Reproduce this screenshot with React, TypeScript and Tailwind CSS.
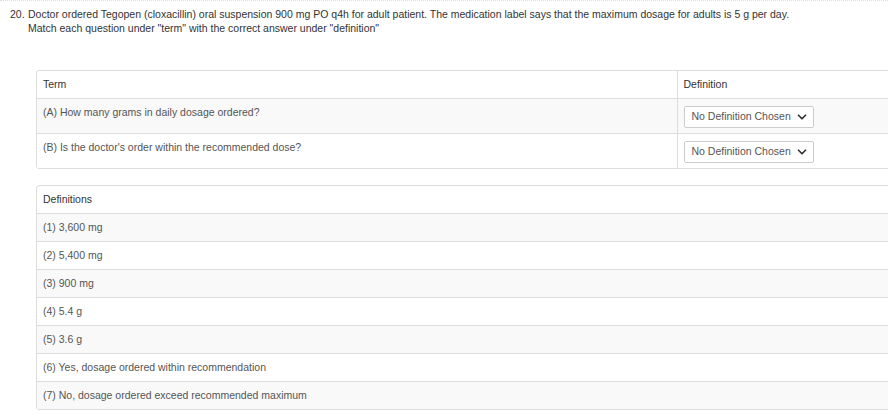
import { ChevronDown } from 'lucide-react'

const terms = [
  '(A) How many grams in daily dosage ordered?',
  "(B) Is the doctor's order within the recommended dose?",
]

const definitions = [
  '(1) 3,600 mg',
  '(2) 5,400 mg',
  '(3) 900 mg',
  '(4) 5.4 g',
  '(5) 3.6 g',
  '(6) Yes, dosage ordered within recommendation',
  '(7) No, dosage ordered exceed recommended maximum',
]

function DefinitionSelect() {
  return (
    <div className="flex h-[22px] w-[130px] items-center justify-between whitespace-nowrap rounded-[2px] border border-[#cccccc] bg-white pl-[7px] pr-[4px] text-[10.5px] text-[#555555]">
      <span>No Definition Chosen</span>
      <ChevronDown size={14} strokeWidth={3} className="text-[#333333]" />
    </div>
  )
}

export default function App() {
  return (
    <div className="h-[415px] w-[888px] overflow-hidden bg-white font-['Liberation_Sans',Arial,sans-serif] text-[#333333]">
      <div className="border-t border-dotted border-[#dddddd]" />

      {/* Question */}
      <div className="flex pl-[10px] pt-[6px] text-[10.5px] leading-[14px]">
        <span className="w-[18px] shrink-0">20.</span>
        <div>
          <p>
            Doctor ordered Tegopen (cloxacillin) oral suspension 900 mg PO q4h for adult patient. The
            medication label says that the maximum dosage for adults is 5 g per day.
          </p>
          <p>Match each question under "term" with the correct answer under "definition"</p>
        </div>
      </div>

      {/* Term table */}
      <div className="ml-[36px] mt-[35px] w-[870px] overflow-hidden rounded-[3px] border border-[#dddddd]">
        <table className="w-full border-collapse text-left">
          <thead>
            <tr className="h-[27px] text-[10.5px] text-[#333333]">
              <th className="w-[640px] border-r border-[#dddddd] px-[6px] pt-[1px] font-normal">Term</th>
              <th className="px-[6px] pt-[1px] font-normal">Definition</th>
            </tr>
          </thead>
          <tbody>
            {terms.map((term, i) => (
              <tr
                key={term}
                className={`h-[35px] border-t border-[#dddddd] align-top text-[10.5px] text-[#555555] ${
                  i % 2 === 0 ? 'bg-[#f9f9f9]' : 'bg-white'
                }`}
              >
                <td className="border-r border-[#dddddd] px-[6px] pt-[6px]">{term}</td>
                <td className="px-[6px] pb-[5px] pt-[7px]">
                  <DefinitionSelect />
                </td>
              </tr>
            ))}
          </tbody>
        </table>
      </div>

      {/* Definitions list */}
      <div className="ml-[36px] mt-[16px] w-[870px] overflow-hidden rounded-[3px] border border-[#dddddd]">
        <div className="flex h-[27px] items-center px-[6px] text-[10.5px] text-[#333333]">Definitions</div>
        {definitions.map((d, i) => (
          <div
            key={d}
            className={`flex h-[28px] items-center border-t border-[#dddddd] px-[6px] text-[10.5px] text-[#555555] ${
              i % 2 === 0 ? 'bg-[#f9f9f9]' : 'bg-white'
            }`}
          >
            {d}
          </div>
        ))}
      </div>
    </div>
  )
}
